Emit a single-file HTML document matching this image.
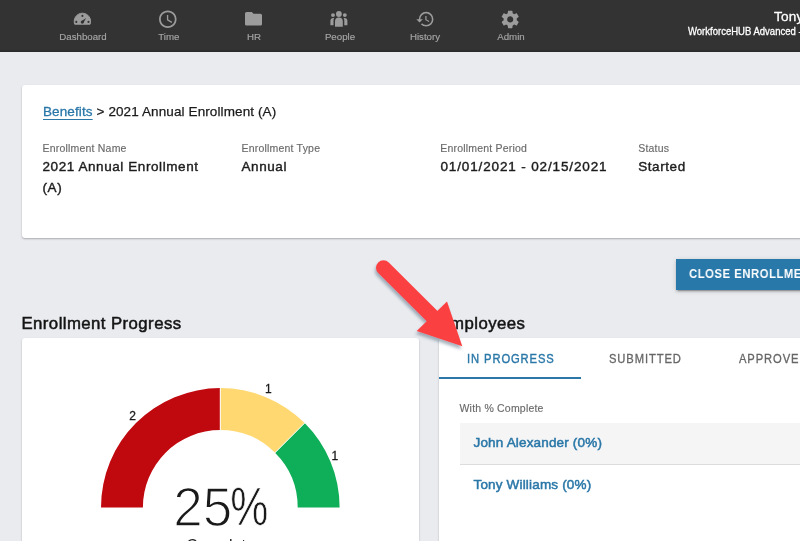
<!DOCTYPE html>
<html>
<head>
<meta charset="utf-8">
<title>Enrollment</title>
<style>
*{box-sizing:border-box;margin:0;padding:0}
html,body{width:800px;height:541px;overflow:hidden;background:#e9ebef;font-family:"Liberation Sans",sans-serif;color:#1a1a1a}
#page{position:absolute;left:0;top:0;width:800px;height:541px;overflow:hidden;will-change:transform}
.abs{position:absolute;white-space:nowrap}
#nav{position:absolute;left:0;top:0;width:800px;height:51.7px;background:#333333;box-shadow:inset 0 -1.5px 0 #2a2a2a}
.nl{position:absolute;top:31px;width:80px;text-align:center;color:#a6a6a6;font-size:9.700px;line-height:12px;-webkit-text-stroke:.15px #a6a6a6}
.card{position:absolute;background:#fff;border-radius:3px;box-shadow:0 1px 2px rgba(0,0,0,.28)}
.lbl{font-size:10.5px;color:#6a6a6a;letter-spacing:.2px;-webkit-text-stroke:.15px #6a6a6a}
.val{font-size:13.5px;color:#1c1c1c;letter-spacing:.58px;line-height:21px;-webkit-text-stroke:.4px #1c1c1c}
.h{font-size:16.8px;color:#141414;letter-spacing:.42px;-webkit-text-stroke:.5px #141414}
.tab{font-size:12.3px;letter-spacing:1px;color:#666;transform:scaleX(.91);transform-origin:0 0;-webkit-text-stroke:.3px #666}
.emp{font-size:13.5px;color:#2a77a8;letter-spacing:.17px;-webkit-text-stroke:.5px #2a77a8}
</style>
</head>
<body>
<div id="page">
<div id="nav">
  <svg class="abs" style="left:0;top:0" width="800" height="51" viewBox="0 0 800 51" fill="#9c9c9c">
    <!-- dashboard -->
    <path d="M74.690 24.200A8.200 8.200 0 1 1 90.110 24.200Z" stroke="#9c9c9c" stroke-width="1" stroke-linejoin="round"/>
    <g fill="#333">
      <circle cx="82.400" cy="15.900" r="1.050"/><circle cx="76.300" cy="21.900" r="1.050"/><circle cx="88.500" cy="21.900" r="1.050"/>
      <circle cx="82.300" cy="22.100" r="1.600"/>
      <path d="M81.300 21.200L86.100 17.900L83.400 23Z"/>
    </g>
    <!-- time -->
    <svg x="157.300" y="8.750" width="21" height="21" viewBox="0 0 24 24"><path d="M11.990 2C6.470 2 2 6.480 2 12s4.470 10 9.990 10C17.520 22 22 17.520 22 12S17.520 2 11.990 2zM12 20c-4.420 0-8-3.580-8-8s3.580-8 8-8 8 3.580 8 8-3.580 8-8 8zm.5-13H11v6l5.250 3.150.75-1.230-4.500-2.670z"/></svg>
    <!-- folder -->
    <svg x="243.300" y="8.600" width="20.400" height="20.400" viewBox="0 0 24 24"><path d="M10 4H4c-1.100 0-1.990.9-1.990 2L2 18c0 1.100.9 2 2 2h16c1.100 0 2-.9 2-2V8c0-1.100-.9-2-2-2h-8l-2-2z"/></svg>
    <!-- people -->
    <circle cx="338.900" cy="14" r="2.900"/><circle cx="333" cy="15.100" r="1.950"/><circle cx="344.800" cy="15.100" r="1.950"/>
    <path d="M335 26.800V21.500a3.900 3.900 0 0 1 7.800 0V26.800Z"/>
    <path d="M330.400 25.300V21a3.100 3.100 0 0 1 3.100-3.100h.7c-.6 1-.7 2.100-.7 3.600V25.300Z"/>
    <path d="M347.400 25.300V21a3.100 3.100 0 0 0-3.100-3.100h-.7c.6 1 .7 2.100.7 3.600V25.300Z"/>
    <!-- history -->
    <svg x="415.500" y="9.400" width="19.600" height="19.600" viewBox="0 0 24 24"><path d="M13 3a9 9 0 0 0-9 9H1l3.890 3.890.07.140L9 12H6c0-3.870 3.130-7 7-7s7 3.130 7 7-3.130 7-7 7c-1.930 0-3.680-.79-4.940-2.060l-1.420 1.420A8.954 8.954 0 0 0 13 21a9 9 0 0 0 0-18zm-1 5v5l4.280 2.540.72-1.210-3.500-2.080V8H12z"/></svg>
    <!-- gear -->
    <svg x="499.700" y="8.900" width="21" height="21" viewBox="0 0 24 24"><path d="M19.430 12.980c.04-.32.070-.64.070-.98s-.03-.66-.07-.98l2.110-1.650c.19-.15.240-.42.120-.64l-2-3.460c-.12-.22-.39-.3-.61-.22l-2.490 1c-.52-.4-1.080-.73-1.690-.98l-.38-2.650C14.460 2.180 14.250 2 14 2h-4c-.25 0-.46.180-.49.420l-.38 2.650c-.61.250-1.170.59-1.690.98l-2.490-1c-.23-.09-.49 0-.61.220l-2 3.460c-.13.220-.07.490.12.640l2.110 1.650c-.04.320-.07.650-.07.980s.03.660.07.980l-2.110 1.650c-.19.150-.24.420-.12.640l2 3.460c.12.220.39.300.61.220l2.490-1c.52.400 1.080.73 1.690.98l.38 2.650c.03.240.24.420.49.420h4c.25 0 .46-.18.490-.42l.38-2.650c.61-.25 1.170-.59 1.690-.98l2.490 1c.23.090.49 0 .61-.22l2-3.460c.12-.22.070-.49-.12-.64l-2.110-1.650zM12 15.500c-1.930 0-3.500-1.570-3.500-3.500s1.570-3.500 3.500-3.500 3.500 1.570 3.500 3.500-1.570 3.500-3.500 3.500z"/></svg>
  </svg>
  <div class="nl" style="left:43px">Dashboard</div>
  <div class="nl" style="left:128.8px">Time</div>
  <div class="nl" style="left:214px">HR</div>
  <div class="nl" style="left:300px">People</div>
  <div class="nl" style="left:385px">History</div>
  <div class="nl" style="left:471px">Admin</div>
  <div class="abs" style="left:774px;top:8.5px;font-size:13.600px;line-height:16px;color:#fff;-webkit-text-stroke:.3px #fff;letter-spacing:.2px">Tony</div>
  <div class="abs" style="left:687.500px;top:25px;font-size:10.300px;line-height:13px;color:#fff;-webkit-text-stroke:.3px #fff;transform:scaleX(.925);transform-origin:0 0">WorkforceHUB Advanced -</div>
</div>

<div class="card" style="left:22px;top:84.5px;width:800px;height:153.6px"></div>
<div class="abs" style="left:43px;top:104px;font-size:13.5px;line-height:16px;color:#1a1a1a;letter-spacing:.11px;-webkit-text-stroke:.25px #1a1a1a"><span style="color:#2a77a8;text-decoration:underline;text-underline-offset:2.5px;-webkit-text-stroke:.3px #2a77a8">Benefits</span> &gt; 2021 Annual Enrollment (A)</div>

<div class="abs lbl" style="left:42.5px;top:141.5px">Enrollment Name</div>
<div class="abs val" style="left:42.5px;top:155.5px">2021 Annual Enrollment<br>(A)</div>
<div class="abs lbl" style="left:241.5px;top:141.5px">Enrollment Type</div>
<div class="abs val" style="left:241.5px;top:155.5px">Annual</div>
<div class="abs lbl" style="left:440.3px;top:141.5px">Enrollment Period</div>
<div class="abs val" style="left:440.5px;top:155.5px;letter-spacing:.86px">01/01/2021 - 02/15/2021</div>
<div class="abs lbl" style="left:638.2px;top:141.5px">Status</div>
<div class="abs val" style="left:638.2px;top:155.5px">Started</div>

<div class="abs" style="left:676px;top:259px;width:140px;height:30.5px;background:#2878a9;box-shadow:0 2px 2px rgba(0,0,0,.14),0 3px 1px -2px rgba(0,0,0,.2),0 1px 5px rgba(0,0,0,.14)"></div>
<div class="abs" style="left:688.5px;top:266px;font-size:13px;font-weight:bold;color:#fff;letter-spacing:.6px;line-height:16px;transform:scaleX(.87);transform-origin:0 0">CLOSE ENROLLMENT</div>

<div class="abs h" style="left:21.5px;top:314px">Enrollment Progress</div>
<div class="abs h" style="left:438.5px;top:314px">Employees</div>

<div class="card" style="left:22px;top:338px;width:397px;height:230px"></div>
<div class="card" style="left:439px;top:338px;width:400px;height:230px"></div>

<svg class="abs" style="left:22px;top:338px" width="397" height="203" viewBox="22 338 397 203">
  <g>
    <path d="M101.00 507.40A119.3 119.3 0 0 1 220.30 388.10L220.30 430.00A77.4 77.4 0 0 0 142.90 507.40Z" fill="#c0080f"/>
    <path d="M220.30 388.10A119.3 119.3 0 0 1 304.66 423.04L275.03 452.67A77.4 77.4 0 0 0 220.30 430.00Z" fill="#ffd872"/>
    <path d="M304.66 423.04A119.3 119.3 0 0 1 339.60 507.40L297.70 507.40A77.4 77.4 0 0 0 275.03 452.67Z" fill="#0fae58"/>
    <path d="M220.30 387.10L220.30 431.00M305.36 422.34L274.32 453.38" stroke="#fff" stroke-width="1" fill="none"/>
  </g>
  <g font-family="Liberation Sans, sans-serif" font-size="12" fill="#1a1a1a" stroke="#1a1a1a" stroke-width=".3" text-anchor="middle">
    <text x="132.500" y="420">2</text>
    <text x="268.300" y="393">1</text>
    <text x="334.800" y="459.500">1</text>
  </g>
  <g font-family="Liberation Sans, sans-serif" font-size="56.200" fill="#1a1a1a" stroke="#fff" stroke-width="1.500">
    <text transform="translate(173.3 525.6) scale(.943 1)">25</text>
    <text transform="translate(230.2 525.3) scale(.80 1)" font-size="53.500" stroke-width=".700">%</text>
  </g>
  <text x="220.5" y="551.3" font-family="Liberation Sans, sans-serif" font-size="16" fill="#1a1a1a" text-anchor="middle">Complete</text>
</svg>

<div class="abs tab" style="left:466.5px;top:352px;color:#2a77a8;-webkit-text-stroke:.4px #2a77a8">IN PROGRESS</div>
<div class="abs tab" style="left:608.5px;top:352px">SUBMITTED</div>
<div class="abs tab" style="left:738.5px;top:352px">APPROVED</div>
<div class="abs" style="left:439px;top:377px;width:142px;height:2px;background:#2a77a8"></div>

<div class="abs lbl" style="left:459.5px;top:402px">With % Complete</div>
<div class="abs" style="left:460px;top:423px;width:360px;height:42px;background:#f5f5f5;border-bottom:1px solid #dcdcdc"></div>
<div class="abs emp" style="left:473.5px;top:435px">John Alexander (0%)</div>
<div class="abs emp" style="left:473.5px;top:477px">Tony Williams (0%)</div>

<svg class="abs" style="left:0;top:0;pointer-events:none" width="800" height="541" viewBox="0 0 800 541">
  <defs><filter id="sh" x="-20%" y="-20%" width="150%" height="150%"><feGaussianBlur in="SourceAlpha" stdDeviation="1.800"/><feOffset dx="-1" dy="2.500" result="b"/><feFlood flood-color="#4a6478" flood-opacity=".48"/><feComposite in2="b" operator="in"/><feMerge><feMergeNode/><feMergeNode in="SourceGraphic"/></feMerge></filter></defs>
  <g filter="url(#sh)">
    <line x1="383.500" y1="267.700" x2="436" y2="320" stroke="#fb4143" stroke-width="15" stroke-linecap="round"/>
    <path d="M462.300 346.300L416.700 331.100L447 301.600Z" fill="#fb4143"/>
  </g>
</svg>
</div>
</body>
</html>
